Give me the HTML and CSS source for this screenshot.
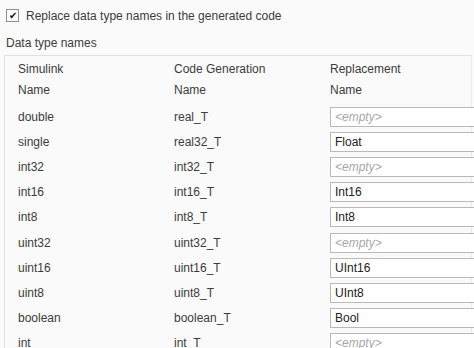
FILE: index.html
```html
<!DOCTYPE html>
<html lang="en">
<head>
    <meta charset="UTF-8">
    <title>Data type replacement</title>
    <link rel="stylesheet" href="styles.css">
</head>
<body>

<div class="pane">
    <label class="check-row">
        <span class="check-box">&#10004;</span>
        <span>Replace data type names in the generated code</span>
    </label>

    <div class="group-title">Data type names</div>

    <div class="group">
        <div class="table">
            <div class="head">Simulink</div>
            <div class="head">Code Generation</div>
            <div class="head">Replacement</div>
            <div class="head">Name</div>
            <div class="head">Name</div>
            <div class="head">Name</div>

            <div class="cell">double</div>
            <div class="cell">real_T</div>
            <div class="cell"><input class="field" placeholder="<empty>"></div>

            <div class="cell">single</div>
            <div class="cell">real32_T</div>
            <div class="cell"><input class="field" value="Float"></div>

            <div class="cell">int32</div>
            <div class="cell">int32_T</div>
            <div class="cell"><input class="field" placeholder="<empty>"></div>

            <div class="cell">int16</div>
            <div class="cell">int16_T</div>
            <div class="cell"><input class="field" value="Int16"></div>

            <div class="cell">int8</div>
            <div class="cell">int8_T</div>
            <div class="cell"><input class="field" value="Int8"></div>

            <div class="cell">uint32</div>
            <div class="cell">uint32_T</div>
            <div class="cell"><input class="field" placeholder="<empty>"></div>

            <div class="cell">uint16</div>
            <div class="cell">uint16_T</div>
            <div class="cell"><input class="field" value="UInt16"></div>

            <div class="cell">uint8</div>
            <div class="cell">uint8_T</div>
            <div class="cell"><input class="field" value="UInt8"></div>

            <div class="cell">boolean</div>
            <div class="cell">boolean_T</div>
            <div class="cell"><input class="field" value="Bool"></div>

            <div class="cell">int</div>
            <div class="cell">int_T</div>
            <div class="cell"><input class="field" placeholder="<empty>"></div>
        </div>
    </div>
</div>

</body>
</html>
```

FILE: styles.css
```css
body {
    margin: 0;
    background-color: #fbfbfb;
    font-family: "Liberation Sans", Arial, sans-serif;
    font-size: 12px;
    color: #3c3c3c;
    overflow: hidden;
}
.pane {
    width: 474px;
    height: 348px;
    overflow: hidden;
}
.check-row {
    display: flex;
    align-items: center;
    gap: 7px;
    height: 13px;
    margin: 9px 0 0 6px;
}
.check-box {
    box-sizing: border-box;
    width: 13px;
    height: 13px;
    border: 1px solid #8f8f8f;
    background-color: #fff;
    font-size: 10px;
    line-height: 11px;
    text-align: center;
    color: #111;
}
.group-title {
    margin: 14px 0 0 6px;
    line-height: 14px;
}
.group {
    margin: 5px 2px 0 4px;
    border: 1px solid #e2e2e2;
    border-right-color: #ececec;
    background-color: #fafafa;
    padding: 3px 0 0 13px;
}
.table {
    display: grid;
    grid-template-columns: 156px 156px 150px;
    grid-template-rows: 21px 24px;
    grid-auto-rows: 25.2px;
}
.head {
    line-height: 20px;
}
.cell {
    display: flex;
    align-items: center;
}
.field {
    box-sizing: border-box;
    width: 160px;
    height: 20px;
    margin: 0;
    padding: 0 4px;
    border: 1px solid #b9b9b9;
    background-color: #fff;
    font-family: "Liberation Sans", Arial, sans-serif;
    font-size: 12px;
    color: #222;
    outline: none;
}
.field::placeholder {
    color: #a8a8a8;
    font-style: italic;
}
```
